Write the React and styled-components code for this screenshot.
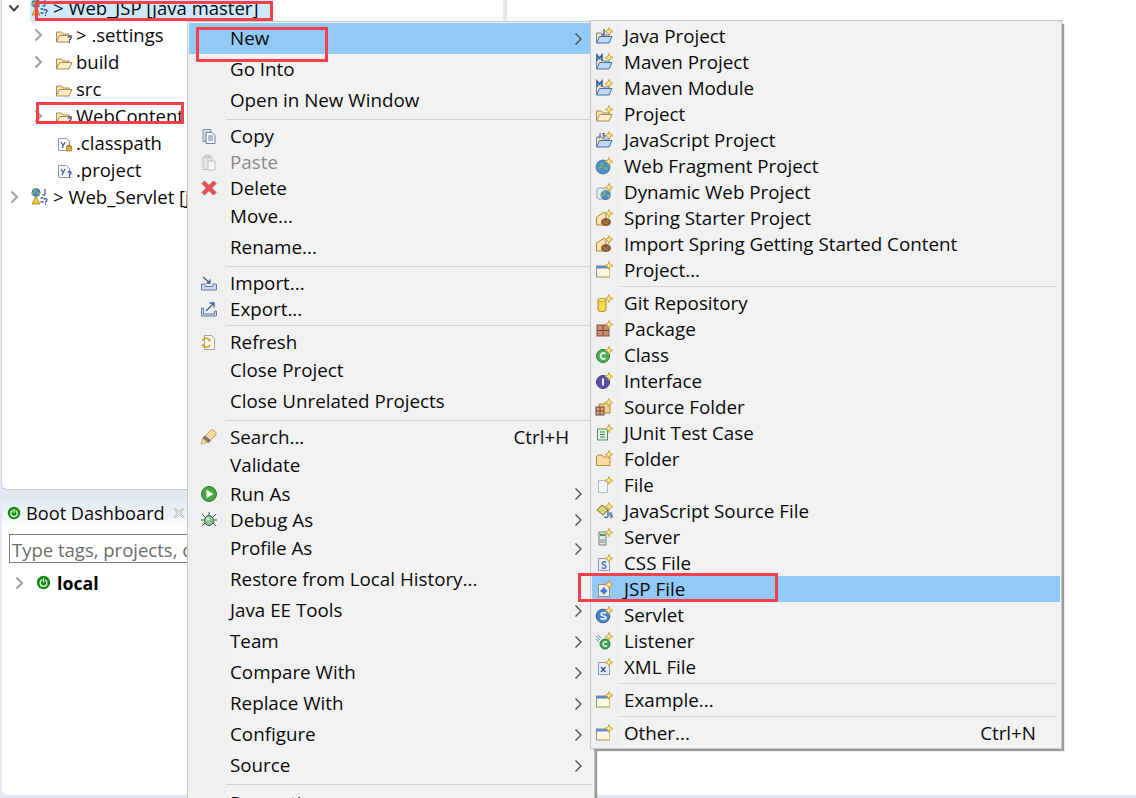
import React from 'react'
import styled, { createGlobalStyle } from 'styled-components'

const GlobalStyle = createGlobalStyle`
  html, body { margin: 0; padding: 0; background: #fff; }
  body { font-family: "Open Sans", "Noto Sans", sans-serif; color: #0a0a0a; }
`

// ---- icons ----
const Svg = styled.svg`
  display: block;
  flex: none;
  width: ${(p) => p.$size || 18}px;
  height: ${(p) => p.$size || 18}px;
`

const ChevronSvg = styled.svg`
  display: block;
  flex: none;
  width: ${(p) => (p.$down ? 12 : 9)}px;
  height: ${(p) => (p.$down ? 12 : 14)}px;
`

const Star = () => (
  <path d="M14 .5l1.2 2.8L18 4.5l-2.8 1.2L14 8.5l-1.2-2.8L10 4.5l2.8-1.2z" fill="#fce58f" stroke="#c2982c" strokeWidth=".8" />
)
const Folder = ({ blue }) => (
  <>
    <path d="M1.5 16V6h5l1.5 2h6v2" fill="#f8e7b4" stroke={blue ? '#6d87a8' : '#b08a4c'} />
    <path d="M1.5 16l3-6.5H17L14 16z" fill={blue ? '#bed8f5' : '#fbeecb'} stroke={blue ? '#44709f' : '#b08a4c'} />
  </>
)
const FilePage = ({ fill = '#f7f9fc', stroke = '#8f9bab' }) => (
  <path d="M3.5 4.500h8l3 3v9h-11z" fill={fill} stroke={stroke} />
)
const Q = () => <path d="M13 11.500c.5-1.500 3.500-1.200 3 .8-.3 1-1.500 1-1.500 2.200M14.500 15.500v1.500" fill="none" stroke="#2f47a8" strokeWidth="1.200" />
const Globe = ({ cx = 8, cy = 11, r = 6 }) => (
  <>
    <circle cx={cx} cy={cy} r={r} fill="#4c8fd0" stroke="#2f5f96" strokeWidth=".7" />
    <path d={`M${cx - 3} ${cy - 3}c2-1 3 1 2 2s-3 1-3 3M${cx + 1} ${cy + 1}c2-1 3 0 2 2`} fill="none" stroke="#7fb661" strokeWidth="1.700" />
  </>
)

const icons = {
  folderQ: <><Folder /><Q /></>,
  folder: <Folder />,
  classpath: (
    <>
      <FilePage />
      <path d="M6 8l1.800 3M10 8l-3 6" fill="none" stroke="#3c5a94" strokeWidth="1.200" />
      <rect x="11.500" y="12.500" width="5" height="4.500" fill="#eaa63c" stroke="#a8701c" strokeWidth=".7" />
      <path d="M12.700 12.500v-1.200h2.600v1.200" fill="none" stroke="#a8701c" />
    </>
  ),
  projectFile: (
    <>
      <FilePage />
      <path d="M6 8l1.800 3M10 8l-3 6" fill="none" stroke="#3c5a94" strokeWidth="1.200" />
      <Q />
    </>
  ),
  webProject: (
    <>
      <Globe cx={5} cy={4.500} r={4} />
      <path d="M14 1v5c0 1.500-2 1.500-2.500.5" fill="none" stroke="#34558f" strokeWidth="1.200" />
      <path d="M5 8l4 8H1z" fill="#f3c936" stroke="#96761a" strokeWidth=".7" />
      <path d="M9.500 10h3M9.500 14h3" stroke="#3c5a94" strokeWidth="1.300" />
      <Q />
    </>
  ),
  spring: (
    <>
      <circle cx="9" cy="9" r="8" fill="#138a13" />
      <circle cx="9" cy="9.500" r="4" fill="none" stroke="#d9f2d9" strokeWidth="1.700" />
      <path d="M9 3.500v5" stroke="#138a13" strokeWidth="3.500" />
      <path d="M9 4v5" stroke="#d9f2d9" strokeWidth="1.700" />
    </>
  ),
  closeTab: (
    <path d="M2 3.500L3.500 2 9 7l5.500-5L16 3.500 11 9l5 5.500-1.500 1.500L9 11l-5.500 5L2 14.500 7 9z" fill="#f4f4f4" stroke="#8c8c8c" />
  ),
  copy: (
    <>
      <path d="M3 2.500h8v12H3z" fill="#cfdcec" stroke="#7f93ad" />
      <path d="M6 5.500h6l3 3v8H6z" fill="#f7f9fc" stroke="#6f86a6" />
      <path d="M8 9h5M8 11h5M8 13h5" stroke="#6f86a6" />
    </>
  ),
  paste: (
    <>
      <path d="M3 3.500h9v13H3z" fill="#e5e5e5" stroke="#c2c2c2" />
      <path d="M5.500 2h4v3h-4z" fill="#d9d9d9" stroke="#bdbdbd" />
      <path d="M8 8h7v9H8z" fill="#f7f7f7" stroke="#c2c2c2" />
    </>
  ),
  remove: (
    <path d="M2 4.500L4.500 2 9 6.500 13.500 2 16 4.500 11.500 9l4.500 4.500-2.500 2.500L9 11.500 4.500 16 2 13.500 6.500 9z" fill="#e8505a" stroke="#d3454c" strokeLinejoin="round" />
  ),
  importIcon: (
    <>
      <path d="M1.500 10v6h15v-6h-3.500v2.500H5V10z" fill="#cfdcec" stroke="#5e7fa8" />
      <path d="M3 3l7 6M10 5.500V9H6.500" fill="none" stroke="#35618f" strokeWidth="1.300" />
    </>
  ),
  exportIcon: (
    <>
      <path d="M1.500 8v8h15v-5h-2v3H3.500V8z" fill="#cfdcec" stroke="#5e7fa8" />
      <path d="M6 11l8-8M9.500 3H14v4.500" fill="none" stroke="#35618f" strokeWidth="1.300" />
    </>
  ),
  refresh: (
    <>
      <path d="M4.500 2.500h7l3 3v11h-10z" fill="#faf6e8" stroke="#a2a2a2" />
      <path d="M2.500 7.500c1-3 6-3 7 0l1-1M10 12c-1 3-6 3-7 0l-1 1" fill="none" stroke="#d89c20" strokeWidth="1.500" />
    </>
  ),
  search: (
    <>
      <path d="M1 16l2-6 8-8c2-1 6 2 5 5l-8 7z" fill="#f1d9a0" stroke="#c59a52" />
      <path d="M5 7.500l6 5-2.500 2.500-6-5z" fill="#7f7468" />
      <path d="M1 16l2-3 1.500 1.500z" fill="#fbf3d0" />
    </>
  ),
  run: (
    <>
      <circle cx="9" cy="9" r="7.500" fill="#47a447" stroke="#2a7d2a" />
      <path d="M6.500 4.800v8.400L13.500 9z" fill="#f4fbe9" />
    </>
  ),
  debug: (
    <>
      <path d="M2 3l3 3M16 3l-3 3M1 9h3M17 9h-3M2 15l3-3M16 15l-3-3M9 1v3" stroke="#3f5a4c" />
      <ellipse cx="9" cy="9.500" rx="4.500" ry="5" fill="#8cc79a" stroke="#3f5a4c" />
      <circle cx="8" cy="8" r="1.500" fill="#d9f0dc" />
    </>
  ),
  javaProject: (
    <>
      <Folder blue />
      <path d="M9 2v5c0 1.500-2 1.500-2.500.5" fill="none" stroke="#34558f" strokeWidth="1.300" />
      <Star />
    </>
  ),
  mavenProject: (
    <>
      <Folder blue />
      <path d="M2 8V2l2.500 3L7 2v6" fill="none" stroke="#2d5b93" strokeWidth="1.500" />
      <Star />
    </>
  ),
  project: <><Folder /><Star /></>,
  jsProject: (
    <>
      <Folder blue />
      <path d="M5 2v4c0 1-1.500 1-2 .5M10 2.500H8v1.800h2v1.800H7.500" fill="none" stroke="#34558f" />
      <Star />
    </>
  ),
  webFragment: <><Globe cx={8} cy={10} r={7} /><Star /></>,
  dynamicWeb: (
    <>
      <rect x="2" y="5" width="13" height="11" rx="2" fill="#e3ebf6" stroke="#8aa0bd" />
      <Globe cx={10.500} cy={12} r={4.500} />
      <Star />
    </>
  ),
  springProject: (
    <>
      <path d="M1.500 16V8l8-5 1.500 2v11z" fill="#fae2b5" stroke="#b0823c" />
      <ellipse cx="11" cy="13" rx="4.500" ry="3.500" fill="#8c5a30" stroke="#6a4220" strokeWidth=".6" />
      <path d="M8 12l5 3M9 15l5-4" stroke="#c49a6c" strokeWidth=".7" />
      <Star />
    </>
  ),
  wizard: (
    <>
      <rect x="1.500" y="5" width="13" height="11" fill="#fbf7e2" stroke="#8a9088" />
      <path d="M1.500 5h13v2.500h-13z" fill="#5d8cc4" />
      <path d="M14.500 8v8h-10" fill="none" stroke="#dcc36a" />
      <Star />
    </>
  ),
  git: (
    <>
      <path d="M3 6c0-2 8-2 8 0v10c0 2-8 2-8 0z" fill="#f5d84a" stroke="#a68a1c" />
      <ellipse cx="7" cy="6" rx="4" ry="1.500" fill="#fbeb9a" stroke="#a68a1c" strokeWidth=".7" />
      <Star />
    </>
  ),
  packageIcon: (
    <>
      <rect x="2" y="5" width="12" height="11" fill="#c98d72" stroke="#7b5242" />
      <path d="M8 5v11M2 10.500h12" stroke="#6f4a3a" />
      <Star />
    </>
  ),
  classIcon: (
    <>
      <circle cx="8" cy="10" r="6.500" fill="#4eaa58" stroke="#2a7d36" />
      <path d="M10.500 8c-1.500-2-5-1-5 2s3.500 4 5 2" fill="none" stroke="#f2f8ee" strokeWidth="1.700" />
      <Star />
    </>
  ),
  interfaceIcon: (
    <>
      <circle cx="8" cy="10" r="6.500" fill="#5b4fa8" stroke="#40377e" />
      <path d="M8 6.500v7" stroke="#f2f0ff" strokeWidth="2" />
      <Star />
    </>
  ),
  sourceFolder: (
    <>
      <path d="M4 15V6h5l1.500-1.500H15V15z" fill="#f2cf8e" stroke="#ad8544" />
      <rect x="1" y="9" width="8" height="8" fill="#d9a37c" stroke="#6f4a3a" />
      <path d="M5 9v8M1 13h8" stroke="#6f4a3a" />
      <Star />
    </>
  ),
  junit: (
    <>
      <path d="M2.500 5h10v11h-10z" fill="#e5f2e5" stroke="#4e8e5e" />
      <path d="M5 8h5M5 10.500h5M5 13h5" stroke="#3f7f50" />
      <Star />
    </>
  ),
  newFolder: (
    <>
      <path d="M1.500 15.500V6.500l1.500-1.500h4l1.500 2H15v8.500z" fill="#f9dc9e" stroke="#bb8a3c" />
      <Star />
    </>
  ),
  file: <><path d="M3.500 4.500h6l3 2v10h-9z" fill="#f2f6fc" stroke="#aeb9c6" /><Star /></>,
  jsSource: (
    <>
      <path d="M2 8l5-5 6 5-5 5z" fill="#d9d77a" stroke="#73733a" />
      <path d="M13 8v6c0 2-3 2-3.500 .5M17 11h-2v2h2v2h-2.500" fill="none" stroke="#2f5f96" strokeWidth="1.200" />
      <Star />
    </>
  ),
  server: (
    <>
      <path d="M4 4h7v13H4z" fill="#dfe6ea" stroke="#6f8480" />
      <path d="M5 7h5" stroke="#4c9a5a" strokeWidth="2" />
      <path d="M5 11h5v4H5z" fill="#a9b8b0" />
      <Star />
    </>
  ),
  cssFile: (
    <>
      <FilePage fill="#e7eef8" />
      <path d="M11 8.500c-1-1.200-4-1-4 .8s4 1.400 4 3.400-3 2-4.500.8" fill="none" stroke="#3f71ad" strokeWidth="1.300" />
      <Star />
    </>
  ),
  jspFile: (
    <>
      <FilePage fill="#f5ecd9" stroke="#8a8f96" />
      <path d="M5 11l4-4 3.500 4-3.500 3.500z" fill="#3f7fe0" />
      <Star />
    </>
  ),
  servlet: (
    <>
      <circle cx="8" cy="10" r="6.800" fill="#4b85c5" stroke="#2f5f96" />
      <path d="M11 7.500c-1-1.200-5-1-5 .9s5 1.200 5 3.200-4 2-5.500.7" fill="none" stroke="#eef5fc" strokeWidth="1.600" />
      <Star />
    </>
  ),
  listener: (
    <>
      <path d="M1 4l4 4M3 3l3 3M1 7l3 3" stroke="#5a7fb0" strokeWidth=".9" />
      <circle cx="10" cy="12" r="5" fill="#3ea24c" stroke="#2a7d36" />
      <path d="M12 10.500c-1-1.200-4-.8-4 1.500s3 3 4 1.500" fill="none" stroke="#f2f8ee" strokeWidth="1.400" />
      <Star />
    </>
  ),
  xmlFile: (
    <>
      <FilePage fill="#eaf0f8" />
      <path d="M6 9l4.500 5M10.500 9L6 14" stroke="#2f4d8a" strokeWidth="1.300" />
      <Star />
    </>
  ),
}

const Icon = ({ name, size }) => (
  <Svg $size={size} viewBox="0 0 18 18" aria-hidden="true">{icons[name]}</Svg>
)

const Chevron = ({ down, color = '#4a4a4a', width = 1.3 }) => (
  <ChevronSvg $down={down} viewBox={down ? '0 0 12 12' : '0 0 9 14'} aria-hidden="true">
    <path d={down ? 'M1.500 3.500L6 8.500l4.500-5' : 'M1.500 1.500L7 7l-5.500 5.500'} fill="none" stroke={color} strokeWidth={width} />
  </ChevronSvg>
)

// ---- page ----
const Page = styled.div`
  position: relative;
  display: flex;
  width: 1136px;
  height: 798px;
  overflow: hidden;
  background: #e3e7f6;
  padding: 0 0 3px 2px;
  box-sizing: border-box;
`

const LeftColumn = styled.div`
  display: flex;
  flex-direction: column;
  gap: 4px;
  width: 501px;
  flex: none;
`

const EditorArea = styled.div`
  flex: 1;
  margin-left: 4px;
  background: #fff;
`

const TreePanel = styled.div`
  height: 490px;
  flex: none;
  box-sizing: border-box;
  overflow: hidden;
  background: #fff;
  border-bottom: 1px solid #c9ccd6;
  border-left: 1px solid #d5d7e0;
  border-bottom-left-radius: 6px;
  margin-left: -1px;
`

const Tree = styled.div`
  margin-top: -6px;
`

const TreeRow = styled.div`
  display: flex;
  align-items: center;
  height: 27px;
  padding-left: ${(p) => (p.$level ? 31 : 7)}px;
  font-size: 18.5px;
  white-space: nowrap;
`

const TreeArrow = styled.span`
  display: flex;
  justify-content: center;
  width: 10px;
  flex: none;
`

const TreeContent = styled.span`
  display: flex;
  align-items: center;
  gap: ${(p) => (p.$level ? 3 : 4)}px;
  height: 27px;
  margin-left: ${(p) => (p.$selected ? 11 : 12)}px;
  padding-left: ${(p) => (p.$selected ? 1 : 0)}px;
  width: ${(p) => (p.$selected ? '241px' : 'auto')};
  background: ${(p) => (p.$selected ? '#cde8ff' : 'transparent')};
`

const DashPanel = styled.div`
  flex: 1;
  background: #fff;
  border-bottom-left-radius: 5px;
  overflow: hidden;
`

const DashHeader = styled.div`
  display: flex;
  align-items: center;
  gap: 5px;
  height: 36px;
  box-sizing: border-box;
  padding: 2px 0 0 5px;
  font-size: 18.2px;
  background: linear-gradient(#dde6f1, #fff);
  white-space: nowrap;
`

const CloseMark = styled.span`
  margin-left: 3px;
`

const FilterInput = styled.div`
  margin: 4px 0 0 7px;
  height: 29px;
  box-sizing: border-box;
  border: 1px solid #7d7d7d;
  padding-left: 2px;
  font-size: 18.5px;
  line-height: 29px;
  color: #6d6d6d;
  white-space: nowrap;
`

const LocalRow = styled.div`
  display: flex;
  align-items: center;
  height: 27px;
  margin-top: 6px;
  padding-left: 13px;
  font-size: 17.8px;
  font-weight: 700;
  color: #000;
`

const LocalIcon = styled.span`
  margin: 0 6px 0 12px;
`

// ---- menus ----
const Menu = styled.div`
  position: absolute;
  left: ${(p) => p.$left}px;
  top: ${(p) => p.$top}px;
  width: ${(p) => p.$width}px;
  box-sizing: border-box;
  padding: ${(p) => p.$pad}px 1px;
  border: 1px solid #c8c8c8;
  box-shadow: 3px 3px 1px -1px #9a9a9a;
  background: linear-gradient(to right, #f0f0f0 ${(p) => p.$gutter + 1}px, #f2f2f2 ${(p) => p.$gutter + 1}px);
  font-size: 18.8px;
`

const MenuRow = styled.div`
  display: flex;
  align-items: center;
  height: ${(p) => (p.$plain ? 31 : 26)}px;
  background: ${(p) => (p.$active ? '#91c9f7' : 'transparent')};
  white-space: nowrap;
  color: ${(p) => (p.$disabled ? '#8a8a8a' : '#0a0a0a')};
`

const Gutter = styled.span`
  display: flex;
  align-items: center;
  flex: none;
  box-sizing: border-box;
  width: ${(p) => p.$gutter}px;
  padding-left: ${(p) => p.$inset}px;
`

const RowLabel = styled.span`
  flex: 1;
  padding: 0 0 ${(p) => (p.$plain ? 2 : 0)}px 4px;
`

const Shortcut = styled.span`
  flex: none;
`

const ArrowSlot = styled.span`
  display: flex;
  justify-content: flex-end;
  box-sizing: border-box;
  flex: none;
  width: 24px;
  padding-right: 10px;
`

const Separator = styled.div`
  height: 7px;
  margin: 0 ${(p) => p.$right}px 0 ${(p) => p.$gutter}px;
  background: linear-gradient(#d6d6d6, #d6d6d6) center / 100% 1px no-repeat;
`

// red boxes drawn on the screenshot
const Mark = styled.div`
  position: absolute;
  box-sizing: border-box;
  left: ${(p) => p.$x}px;
  top: ${(p) => p.$y}px;
  width: ${(p) => p.$w}px;
  height: ${(p) => p.$h}px;
  border: 3px solid #f5404a;
`

const treeRows = [
  { text: '> Web_JSP [java master]', icon: 'webProject', arrow: 'down', selected: true },
  { text: '> .settings', icon: 'folderQ', arrow: 'right', level: 1 },
  { text: 'build', icon: 'folder', arrow: 'right', level: 1 },
  { text: 'src', icon: 'folder', level: 1 },
  { text: 'WebContent', icon: 'folderQ', arrow: 'right', level: 1 },
  { text: '.classpath', icon: 'classpath', level: 1 },
  { text: '.project', icon: 'projectFile', level: 1 },
  { text: '> Web_Servlet [java master]', icon: 'webProject', arrow: 'right' },
]

const mainMenu = [
  { text: 'New', arrow: true, active: true },
  { text: 'Go Into' },
  { text: 'Open in New Window' },
  { sep: true },
  { text: 'Copy', icon: 'copy' },
  { text: 'Paste', icon: 'paste', disabled: true },
  { text: 'Delete', icon: 'remove' },
  { text: 'Move...' },
  { text: 'Rename...' },
  { sep: true },
  { text: 'Import...', icon: 'importIcon' },
  { text: 'Export...', icon: 'exportIcon' },
  { sep: true },
  { text: 'Refresh', icon: 'refresh' },
  { text: 'Close Project' },
  { text: 'Close Unrelated Projects' },
  { sep: true },
  { text: 'Search...', icon: 'search', shortcut: 'Ctrl+H' },
  { text: 'Validate' },
  { text: 'Run As', icon: 'run', arrow: true },
  { text: 'Debug As', icon: 'debug', arrow: true },
  { text: 'Profile As', arrow: true },
  { text: 'Restore from Local History...' },
  { text: 'Java EE Tools', arrow: true },
  { text: 'Team', arrow: true },
  { text: 'Compare With', arrow: true },
  { text: 'Replace With', arrow: true },
  { text: 'Configure', arrow: true },
  { text: 'Source', arrow: true },
  { sep: true },
  { text: 'Properties' },
]

const newMenu = [
  { text: 'Java Project', icon: 'javaProject' },
  { text: 'Maven Project', icon: 'mavenProject' },
  { text: 'Maven Module', icon: 'mavenProject' },
  { text: 'Project', icon: 'project' },
  { text: 'JavaScript Project', icon: 'jsProject' },
  { text: 'Web Fragment Project', icon: 'webFragment' },
  { text: 'Dynamic Web Project', icon: 'dynamicWeb' },
  { text: 'Spring Starter Project', icon: 'springProject' },
  { text: 'Import Spring Getting Started Content', icon: 'springProject' },
  { text: 'Project...', icon: 'wizard' },
  { sep: true },
  { text: 'Git Repository', icon: 'git' },
  { text: 'Package', icon: 'packageIcon' },
  { text: 'Class', icon: 'classIcon' },
  { text: 'Interface', icon: 'interfaceIcon' },
  { text: 'Source Folder', icon: 'sourceFolder' },
  { text: 'JUnit Test Case', icon: 'junit' },
  { text: 'Folder', icon: 'newFolder' },
  { text: 'File', icon: 'file' },
  { text: 'JavaScript Source File', icon: 'jsSource' },
  { text: 'Server', icon: 'server' },
  { text: 'CSS File', icon: 'cssFile' },
  { text: 'JSP File', icon: 'jspFile', active: true },
  { text: 'Servlet', icon: 'servlet' },
  { text: 'Listener', icon: 'listener' },
  { text: 'XML File', icon: 'xmlFile' },
  { sep: true },
  { text: 'Example...', icon: 'wizard' },
  { sep: true },
  { text: 'Other...', icon: 'wizard', shortcut: 'Ctrl+N' },
]

const ContextMenu = ({ items, left, top, width, pad, gutter, inset, sepRight, plainRows }) => (
  <Menu $left={left} $top={top} $width={width} $pad={pad} $gutter={gutter}>
    {items.map((item, i) => {
      if (item.sep) return <Separator key={i} $gutter={gutter} $right={sepRight} />
      const plain = plainRows && !item.icon
      return (
        <MenuRow key={i} $plain={plain} $active={item.active} $disabled={item.disabled}>
          <Gutter $gutter={gutter} $inset={inset}>
            {item.icon && <Icon name={item.icon} />}
          </Gutter>
          <RowLabel $plain={plain}>{item.text}</RowLabel>
          {item.shortcut && <Shortcut>{item.shortcut}</Shortcut>}
          <ArrowSlot>{item.arrow && <Chevron />}</ArrowSlot>
        </MenuRow>
      )
    })}
  </Menu>
)

export default function App() {
  return (
    <>
      <GlobalStyle />
      <Page>
        <LeftColumn>
          <TreePanel>
            <Tree>
              {treeRows.map((row) => (
                <TreeRow key={row.text} $level={row.level}>
                  <TreeArrow>
                    {row.arrow === 'down' && <Chevron down color="#444" width={2} />}
                    {row.arrow === 'right' && <Chevron color="#a0a0a0" width={2} />}
                  </TreeArrow>
                  <TreeContent $selected={row.selected} $level={row.level}>
                    <Icon name={row.icon} />
                    {row.text}
                  </TreeContent>
                </TreeRow>
              ))}
            </Tree>
          </TreePanel>
          <DashPanel>
            <DashHeader>
              <Icon name="spring" size={14} />
              Boot Dashboard
              <CloseMark><Icon name="closeTab" size={12} /></CloseMark>
            </DashHeader>
            <FilterInput>Type tags, projects, or working set names</FilterInput>
            <LocalRow>
              <Chevron color="#a0a0a0" width={2} />
              <LocalIcon><Icon name="spring" size={15} /></LocalIcon>
              local
            </LocalRow>
          </DashPanel>
        </LeftColumn>
        <EditorArea />
        <ContextMenu items={mainMenu} left={187} top={21} width={408} pad={1} gutter={37} inset={11} sepRight={0} plainRows />
        <ContextMenu items={newMenu} left={590} top={20} width={472} pad={2} gutter={28} inset={3} sepRight={4} />
        <Mark $x={35} $y={1} $w={238} $h={20} />
        <Mark $x={196} $y={27} $w={132} $h={35} />
        <Mark $x={36} $y={102} $w={148} $h={22} />
        <Mark $x={578} $y={573} $w={200} $h={29} />
      </Page>
    </>
  )
}
